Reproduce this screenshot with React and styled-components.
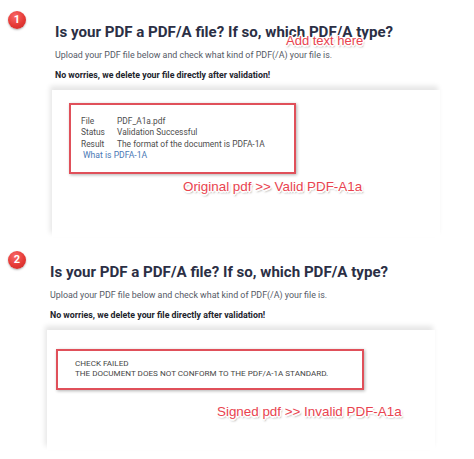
import React from "react";
import styled, {createGlobalStyle} from "styled-components";

const GlobalStyle = createGlobalStyle`
  body {
    margin: 0;
    background: #fff;
    font-family: Roboto, "Liberation Sans", Arial, sans-serif;
  }
`;

const Page = styled.div`
  width: 474px;
  display: flex;
  flex-direction: column;
`;

const Step = styled.section`
  position: relative;
  height: ${p => p.height}px;
  padding-left: ${p => p.indent}px;
  padding-top: 23px;
  box-sizing: border-box;
`;

const Badge = styled.span`
  position: absolute;
  left: 8px;
  top: 11px;
  width: 18px;
  height: 18px;
  border-radius: 50%;
  background: radial-gradient(circle at 40% 30%, #f86a6a 0%, #e53935 55%, #c62828 100%);
  box-shadow: 0 1px 2px rgba(0, 0, 0, 0.3);
  color: #fff;
  font-size: 11px;
  font-weight: 700;
  line-height: 18px;
  text-align: center;
`;

const TitleWrap = styled.div`
  position: relative;
`;

const Title = styled.h2`
  margin: 0;
  color: #2b2f45;
  font-size: 15.1px;
  font-weight: 700;
  line-height: 18px;
  white-space: nowrap;
`;

const outline = `
  font-family: "Liberation Sans", Arial, sans-serif;
  color: #e9434f;
  line-height: 15px;
  white-space: nowrap;
  text-shadow: -1px -1px 0 #fff, 1px -1px 0 #fff, -1px 1px 0 #fff, 1px 1px 0 #fff,
    0 -1.5px 0 #fff, 0 1.5px 0 #fff, 1.5px 0 0 #fff, -1.5px 0 0 #fff,
    1px 2px 2px rgba(0, 0, 0, 0.5);
`;

const Note = styled.span`
  position: absolute;
  left: ${p => p.left}px;
  top: ${p => p.top}px;
  font-size: 13px;
  ${outline}
`;

const Lead = styled.p`
  margin: 8px 0 0;
  color: #555a66;
  font-size: 8.9px;
  line-height: 12px;
  white-space: nowrap;
`;

const Warning = styled.p`
  margin: 8px 0 0;
  color: #22242c;
  font-size: 8.8px;
  font-weight: 700;
  line-height: 12px;
  white-space: nowrap;
`;

const Card = styled.div`
  margin: 9px 0 0 -3px;
  width: 388px;
  height: ${p => p.height}px;
  background: #fff;
  box-shadow: -2px -4px 5px rgba(0, 0, 0, 0.1);
  display: flex;
  flex-direction: column;
  align-items: flex-start;
`;

const Frame = styled.div`
  margin: ${p => p.top}px 0 0 ${p => p.left}px;
  width: ${p => p.width}px;
  height: ${p => p.h}px;
  box-sizing: border-box;
  border: 2px solid #e0505a;
  box-shadow: 1px 1px 3px rgba(0, 0, 0, 0.3);
  padding: ${p => p.pad};
  color: #4d4d4d;
`;

const Row = styled.div`
  display: flex;
  font-size: 8.4px;
  line-height: 11.3px;
  white-space: nowrap;
`;

const Label = styled.span`
  width: 36px;
`;

const Link = styled.a`
  display: block;
  margin-left: 2px;
  color: #4a78b5;
  font-size: 8.6px;
  line-height: 11.5px;
  text-decoration: none;
`;

const Upper = styled.div`
  font-size: 8.1px;
  line-height: 10px;
  color: #444;
  white-space: nowrap;
`;

const Caption = styled.div`
  position: relative;
  margin: ${p => p.top}px 0 0 ${p => p.left}px;
  font-size: 13.4px;
  ${outline}
`;

function Intro({note}) {
  return (
    <>
      <TitleWrap>
        <Title>Is your PDF a PDF/A file? If so, which PDF/A type?</Title>
        {note && <Note left={231} top={10}>{note}</Note>}
      </TitleWrap>
      <Lead>Upload your PDF file below and check what kind of PDF(/A) your file is.</Lead>
      <Warning>No worries, we delete your file directly after validation!</Warning>
    </>
  );
}

const rows = [
  ["File", "PDF_A1a.pdf"],
  ["Status", "Validation Successful"],
  ["Result", "The format of the document is PDFA-1A"],
];

export default function App() {
  return (
    <Page>
      <GlobalStyle/>
      <Step height={240} indent={55}>
        <Badge>1</Badge>
        <Intro note="Add text here"/>
        <Card height={147}>
          <Frame top={13} left={17} width={227} h={71} pad="11px 10px 0 10px">
            {rows.map(([k, v]) => (
              <Row key={k}>
                <Label>{k}</Label>
                <span>{v}</span>
              </Row>
            ))}
            <Link href="#">What is PDFA-1A</Link>
          </Frame>
          <Caption top={5} left={131}>Original pdf &gt;&gt; Valid PDF-A1a</Caption>
        </Card>
      </Step>
      <Step height={219} indent={50}>
        <Badge>2</Badge>
        <Intro/>
        <Card height={120}>
          <Frame top={19} left={9} width={308} h={41} pad="7px 17px 0 17px">
            <Upper>CHECK FAILED</Upper>
            <Upper>THE DOCUMENT DOES NOT CONFORM TO THE PDF/A-1A STANDARD.</Upper>
          </Frame>
          <Caption top={14} left={170}>Signed pdf &gt;&gt; Invalid PDF-A1a</Caption>
        </Card>
      </Step>
    </Page>
  );
}
